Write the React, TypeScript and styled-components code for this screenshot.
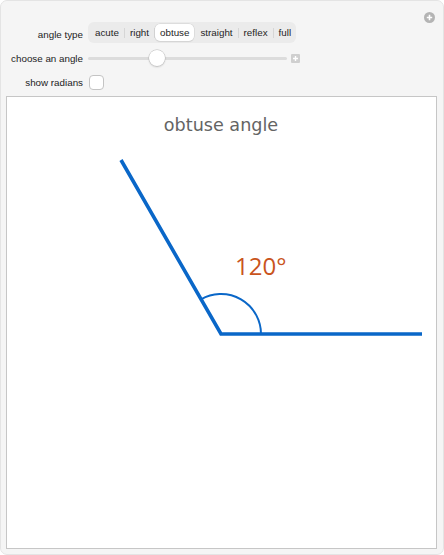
import React from "react";
import styled, { createGlobalStyle } from "styled-components";

const GlobalStyle = createGlobalStyle`
   html, body {
      margin: 0;
      padding: 0;
      background: #ffffff;
   }
   body {
      font-family: "Liberation Sans", Arial, sans-serif;
   }
`;

const options = ["acute", "right", "obtuse", "straight", "reflex", "full"];

const App = () => {
   const active = "obtuse";

   return (
      <>
         <GlobalStyle />
         <Panel>
            <TopBar>
               <CornerPlus>
                  <svg width="11" height="11" viewBox="0 0 11 11">
                     <circle cx="5.5" cy="5.5" r="5.5" fill="#b4b4b4" />
                     <path d="M5.5 2.8v5.4M2.8 5.5h5.4" stroke="#fff" strokeWidth="1.6" />
                  </svg>
               </CornerPlus>
            </TopBar>

            <Controls>
               <Label>angle type</Label>
               <Segmented>
                  {options.map((opt, key) => (
                     <Segment key={key} $active={opt === active} $last={key === options.length - 1}>
                        {opt}
                     </Segment>
                  ))}
               </Segmented>

               <Label>choose an angle</Label>
               <SliderRow>
                  <Track>
                     <Thumb />
                  </Track>
                  <SmallPlus>
                     <svg width="9" height="9" viewBox="0 0 9 9">
                        <rect width="9" height="9" rx="1" fill="#cfcfcf" />
                        <path d="M4.5 2v5M2 4.5h5" stroke="#fff" strokeWidth="1.4" />
                     </svg>
                  </SmallPlus>
               </SliderRow>

               <Label>show radians</Label>
               <CheckRow>
                  <Checkbox />
               </CheckRow>
            </Controls>

            <Plot>
               <svg width="429" height="451" viewBox="0 0 429 451">
                  <text
                     x="214"
                     y="34"
                     textAnchor="middle"
                     fontFamily="'DejaVu Sans', Verdana, sans-serif"
                     fontSize="17.6"
                     fill="#646464"
                  >
                     obtuse angle
                  </text>
                  <path
                     d="M254 237 A40 40 0 0 0 194 202.4"
                     fill="none"
                     stroke="#0a67c8"
                     strokeWidth="2"
                  />
                  <polyline
                     points="114,63 214,237 415,237"
                     fill="none"
                     stroke="#0a67c8"
                     strokeWidth="3.6"
                  />
                  <text
                     x="228"
                     y="178"
                     fontFamily="'Open Sans', 'Noto Sans', sans-serif"
                     fontSize="24"
                     fill="#c9541c"
                  >
                     120°
                  </text>
               </svg>
            </Plot>
         </Panel>
      </>
   );
};

const Panel = styled.div`
   box-sizing: border-box;
   width: 444px;
   height: 555px;
   background: #f5f5f5;
   border: 1px solid #e4e4e4;
   border-radius: 7px;
   display: flex;
   flex-direction: column;
`;

const TopBar = styled.div`
   height: 21px;
   display: flex;
   justify-content: flex-end;
   padding-right: 8px;
`;

const CornerPlus = styled.div`
   margin-top: 8px;
   height: 11px;
`;

const Controls = styled.div`
   display: grid;
   grid-template-columns: 82px 1fr;
   column-gap: 5px;
   grid-auto-rows: auto;
   align-items: center;
   font-size: 9.8px;
   color: #222;
`;

const Label = styled.div`
   text-align: right;
   white-space: nowrap;
`;

const Segmented = styled.div`
   display: flex;
   align-items: center;
   width: 208px;
   height: 21px;
   box-sizing: border-box;
   padding: 0 2px;
   background: #ebebeb;
   border-radius: 6px;
   margin-bottom: 3px;
`;

const Segment = styled.div<{ $active: boolean; $last: boolean }>`
   position: relative;
   height: 17px;
   line-height: 17px;
   padding: 0 5px;
   border-radius: 5px;
   color: #1e1e1e;
   background: ${(p) => (p.$active ? "#ffffff" : "transparent")};
   box-shadow: ${(p) => (p.$active ? "0 0 0 0.5px #cfcfcf, 0 1px 1px rgba(0,0,0,0.08)" : "none")};
   margin-right: 1px;

   &::after {
      content: "";
      display: ${(p) => (p.$last || p.$active ? "none" : "block")};
      position: absolute;
      right: -1px;
      top: 4px;
      height: 10px;
      border-right: 1px solid #d6d6d6;
   }
`;

const SliderRow = styled.div`
   display: flex;
   align-items: center;
   height: 24px;
`;

const Track = styled.div`
   position: relative;
   width: 199px;
   height: 3px;
   border-radius: 2px;
   background: #dcdcdc;
`;

const Thumb = styled.div`
   position: absolute;
   left: 61px;
   top: -7px;
   width: 16px;
   height: 16px;
   border-radius: 50%;
   background: #ffffff;
   box-shadow: 0 0 0 0.5px #bdbdbd, 0 1px 2px rgba(0, 0, 0, 0.2);
`;

const SmallPlus = styled.div`
   margin-left: 4px;
   height: 9px;
   margin-top: 1px;
`;

const CheckRow = styled.div`
   display: flex;
   align-items: center;
   height: 25px;
`;

const Checkbox = styled.div`
   width: 13px;
   height: 13px;
   margin-left: 1px;
   border: 1px solid #c4c4c4;
   border-radius: 4px;
   background: #ffffff;
`;

const Plot = styled.div`
   margin: 1px 0 0 5px;
   width: 429px;
   height: 451px;
   border: 1px solid #c6c6c6;
   background: #ffffff;
   svg {
      display: block;
   }
`;

export default App;
